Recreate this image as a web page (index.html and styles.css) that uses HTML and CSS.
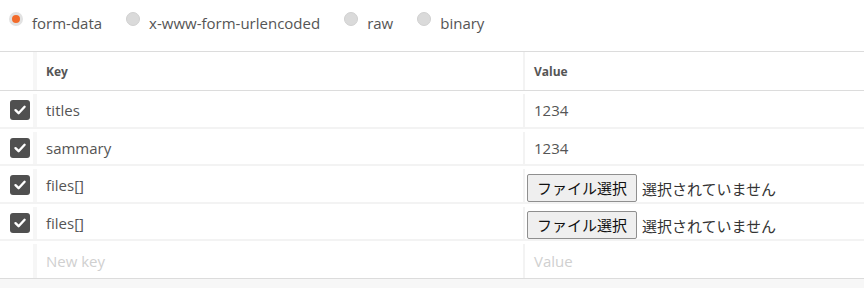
FILE: index.html
```html
<!DOCTYPE html>
<html>
<head>
<meta charset="utf-8">
<link rel="stylesheet" href="styles.css">
</head>
<body>
<div class="modes">
  <label class="mode"><span class="radio on"></span>form-data</label>
  <label class="mode"><span class="radio"></span>x-www-form-urlencoded</label>
  <label class="mode"><span class="radio"></span>raw</label>
  <label class="mode"><span class="radio"></span>binary</label>
</div>
<div class="table">
  <div class="row head">
    <div class="c-check"></div>
    <div class="c-key">Key</div>
    <div class="c-val">Value</div>
  </div>
  <div class="row">
    <div class="c-check"><span class="cb"><svg viewBox="0 0 20 20" width="20" height="20"><path d="M5.5 10.2 L8.6 13.2 L14.6 6.8" fill="none" stroke="#fff" stroke-width="2.4" stroke-linecap="round" stroke-linejoin="round"/></svg></span></div>
    <div class="c-key">titles</div>
    <div class="c-val">1234</div>
  </div>
  <div class="row">
    <div class="c-check"><span class="cb"><svg viewBox="0 0 20 20" width="20" height="20"><path d="M5.5 10.2 L8.6 13.2 L14.6 6.8" fill="none" stroke="#fff" stroke-width="2.4" stroke-linecap="round" stroke-linejoin="round"/></svg></span></div>
    <div class="c-key">sammary</div>
    <div class="c-val">1234</div>
  </div>
  <div class="row">
    <div class="c-check"><span class="cb"><svg viewBox="0 0 20 20" width="20" height="20"><path d="M5.5 10.2 L8.6 13.2 L14.6 6.8" fill="none" stroke="#fff" stroke-width="2.4" stroke-linecap="round" stroke-linejoin="round"/></svg></span></div>
    <div class="c-key">files[]</div>
    <div class="c-val file"><span class="fbtn">ファイル選択</span><span class="fname">選択されていません</span></div>
  </div>
  <div class="row">
    <div class="c-check"><span class="cb"><svg viewBox="0 0 20 20" width="20" height="20"><path d="M5.5 10.2 L8.6 13.2 L14.6 6.8" fill="none" stroke="#fff" stroke-width="2.4" stroke-linecap="round" stroke-linejoin="round"/></svg></span></div>
    <div class="c-key">files[]</div>
    <div class="c-val file"><span class="fbtn">ファイル選択</span><span class="fname">選択されていません</span></div>
  </div>
  <div class="row last">
    <div class="c-check"></div>
    <div class="c-key ph">New key</div>
    <div class="c-val ph">Value</div>
  </div>
</div>
<div class="foot"></div>
</body>
</html>
```
FILE: styles.css
```css
html, body {
  margin: 0;
  padding: 0;
  background: #fff;
}
body {
  font-family: "Open Sans", "Noto Sans", sans-serif;
  color: #555;
  width: 864px;
  height: 288px;
  overflow: hidden;
}
.modes {
  display: flex;
  align-items: center;
  height: 52px;
  padding-left: 9px;
  gap: 24px;
  font-size: 15px;
  border-bottom: 1px solid #dcdcdc;
  box-sizing: border-box;
  padding-bottom: 6px;
}
.mode {
  display: flex;
  align-items: center;
  gap: 9px;
}
.radio {
  width: 14px;
  height: 14px;
  border-radius: 50%;
  background: #dadada;
  box-sizing: border-box;
  border: 1px solid #d0d0d0;
  position: relative;
  top: -4px;
}
.radio.on {
  background: #f26b2b;
  border: 3px solid #e2e2e2;
}
.table {
  width: 864px;
}
.row {
  display: flex;
  height: 37.5px;
  box-sizing: border-box;
  padding-top: 3px;
  border-bottom: 2px solid #f3f3f3;
}
.row.head {
  height: 39px;
  padding-top: 0;
  border-bottom: 1px solid #dcdcdc;
  font-weight: 700;
  color: #555;
}
.row.last {
  border-bottom: 1px solid #dcdcdc;
}
.c-check {
  width: 37px;
  flex: none;
  display: flex;
  align-items: center;
  justify-content: center;
  border-right: 4px solid #f6f6f6;
  padding-left: 7px;
  box-sizing: border-box;
}
.c-key {
  width: 488px;
  flex: none;
  box-sizing: border-box;
  display: flex;
  align-items: center;
  padding-left: 9px;
  font-size: 15px;
  border-right: 2px solid #f3f3f3;
}
.c-val {
  flex: 1;
  display: flex;
  align-items: center;
  padding-left: 9px;
  font-size: 15px;
}
.head .c-key, .head .c-val {
  font-size: 12px;
}
.ph {
  color: #d0d0d0;
}
.cb {
  width: 20px;
  height: 20px;
  border-radius: 3px;
  background: #505050;
  display: block;
}
.cb svg {
  display: block;
}
.file {
  padding-left: 2px;
  font-family: "Noto Sans CJK JP", "Noto Sans", sans-serif;
  font-size: 15px;
  color: #333;
  align-items: flex-end;
}
.fbtn {
  display: inline-block;
  height: 28px;
  line-height: 26px;
  box-sizing: border-box;
  padding: 0 9px;
  border: 1px solid #8f8f8f;
  border-radius: 2px;
  background: #efefef;
  color: #111;
  margin-right: 5px;
}
.fname {
  line-height: 26px;
}
.foot {
  height: 10px;
  background: #f7f7f7;
}
```
